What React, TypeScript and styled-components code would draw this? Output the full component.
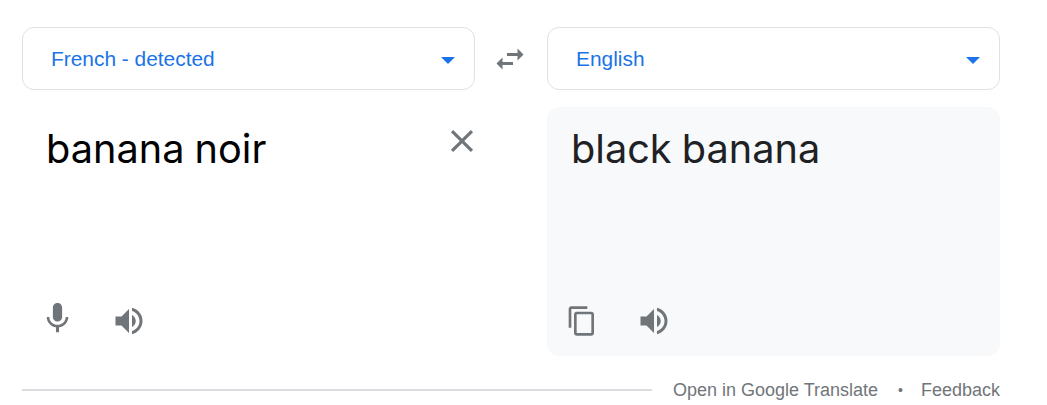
import React from "react";
import styled, { createGlobalStyle } from "styled-components";

const GlobalStyle = createGlobalStyle`
  html, body {
    margin: 0;
    padding: 0;
    background: #fff;
    font-family: "Liberation Sans", Arial, sans-serif;
  }
`;

const Page = styled.div`
  box-sizing: border-box;
  width: 1047px;
  height: 405px;
  padding: 27px 47px 0 22px;
  overflow: hidden;
`;

const Columns = styled.div`
  display: grid;
  grid-template-columns: 453px 72px 453px;
  grid-template-rows: 63px 249px;
  row-gap: 17px;
`;

const LangSelect = styled.div`
  box-sizing: border-box;
  height: 63px;
  border: 1px solid #dfe1e5;
  border-radius: 12px;
  display: flex;
  align-items: center;
  justify-content: space-between;
  padding: 1px 19px 0 28px;
  color: #1a73e8;
  font-size: 20.9px;
`;

const Caret = styled.span`
  width: 0;
  height: 0;
  border-left: 7.5px solid transparent;
  border-right: 7.5px solid transparent;
  border-top: 7.5px solid #1a73e8;
  margin-top: 3px;
`;

const SwapButton = styled.div`
  display: flex;
  align-items: center;
  justify-content: center;
  padding-right: 3px;
  color: #70757a;
`;

const Panel = styled.div<{ $output?: boolean }>`
  box-sizing: border-box;
  height: 249px;
  border-radius: 12px;
  padding: 16px 24px 17px;
  display: flex;
  flex-direction: column;
  justify-content: space-between;
  background: ${(p) => (p.$output ? "#f8f9fa" : "#fff")};
`;

const TextRow = styled.div`
  display: flex;
  justify-content: space-between;
  align-items: flex-start;
`;

const BigText = styled.div<{ $output?: boolean }>`
  font-family: Inter, sans-serif;
  font-size: 39.7px;
  line-height: 52px;
  word-spacing: -1px;
  color: ${(p) => (p.$output ? "#202124" : "#000")};
`;

const ClearButton = styled.div`
  color: #70757a;
  display: flex;
  margin: -1px -30px 0 0;
`;

const IconRow = styled.div`
  display: flex;
  align-items: center;
  gap: 36px;
  margin-left: -7px;
  color: #70757a;
`;

const IconSlot = styled.div`
  width: 36px;
  height: 36px;
  display: flex;
  align-items: center;
  justify-content: center;
`;

const Footer = styled.div`
  display: flex;
  align-items: center;
  margin-top: 23px;
  height: 22px;
  color: #70757a;
  font-size: 18px;
`;

const Divider = styled.div`
  flex: 1;
  height: 2px;
  background: #dadce0;
  margin-right: 21px;
`;

const Dot = styled.span`
  margin: 0 18px 0 20px;
  font-size: 14px;
`;

const SwapIcon = () => (
  <svg width="36" height="36" viewBox="0 0 24 24" fill="currentColor">
    <path d="M6.99 11L3 15l3.99 4v-3H14v-2H6.99v-3zM21 9l-3.99-4v3H10v2h7.01v3L21 9z" />
  </svg>
);

const CloseIcon = () => (
  <svg width="38" height="38" viewBox="0 0 24 24" fill="currentColor">
    <path d="M19 6.41L17.59 5 12 10.59 6.41 5 5 6.41 10.59 12 5 17.59 6.41 19 12 13.41 17.59 19 19 17.59 13.41 12z" />
  </svg>
);

const MicIcon = () => (
  <svg width="37" height="37" viewBox="0 2 24 24" fill="currentColor" style={{ flexShrink: 0 }}>
    <path d="M12 14c1.66 0 2.99-1.34 2.99-3L15 5c0-1.66-1.34-3-3-3S9 3.34 9 5v6c0 1.66 1.34 3 3 3z" />
    <path d="M17.3 11c0 3-2.54 5.1-5.3 5.1S6.7 14 6.7 11H5c0 3.41 2.72 6.23 6 6.72V21h2v-3.28c3.28-.48 6-3.3 6-6.72h-1.7z" />
  </svg>
);

const SpeakerIcon = () => (
  <svg width="36" height="36" viewBox="0 0 24 24" fill="currentColor" style={{ flexShrink: 0 }}>
    <path d="M3 9v6h4l5 5V4L7 9H3zm13.5 3c0-1.77-1.02-3.29-2.5-4.03v8.05c1.48-.73 2.5-2.25 2.5-4.02zM14 3.23v2.06c2.89.86 5 3.54 5 6.71s-2.11 5.85-5 6.71v2.06c4.01-.91 7-4.49 7-8.77s-2.99-7.86-7-8.77z" />
  </svg>
);

const CopyIcon = () => (
  <svg width="32" height="32" viewBox="0 0 24 24" fill="currentColor" style={{ flexShrink: 0 }}>
    <path d="M16 1H4c-1.1 0-2 .9-2 2v14h2V3h12V1zm3 4H8c-1.1 0-2 .9-2 2v14c0 1.1.9 2 2 2h11c1.1 0 2-.9 2-2V7c0-1.1-.9-2-2-2zm0 16H8V7h11v14z" />
  </svg>
);

function App() {
  return (
    <Page>
      <GlobalStyle />
      <Columns>
        <LangSelect>
          French - detected
          <Caret />
        </LangSelect>
        <SwapButton>
          <SwapIcon />
        </SwapButton>
        <LangSelect>
          English
          <Caret />
        </LangSelect>
        <Panel>
          <TextRow>
            <BigText>banana noir</BigText>
            <ClearButton>
              <CloseIcon />
            </ClearButton>
          </TextRow>
          <IconRow>
            <IconSlot>
              <MicIcon />
            </IconSlot>
            <IconSlot>
              <SpeakerIcon />
            </IconSlot>
          </IconRow>
        </Panel>
        <div />
        <Panel $output>
          <TextRow>
            <BigText $output>black banana</BigText>
          </TextRow>
          <IconRow>
            <IconSlot>
              <CopyIcon />
            </IconSlot>
            <IconSlot>
              <SpeakerIcon />
            </IconSlot>
          </IconRow>
        </Panel>
      </Columns>
      <Footer>
        <Divider />
        Open in Google Translate
        <Dot>•</Dot>
        Feedback
      </Footer>
    </Page>
  );
}

export default App;
